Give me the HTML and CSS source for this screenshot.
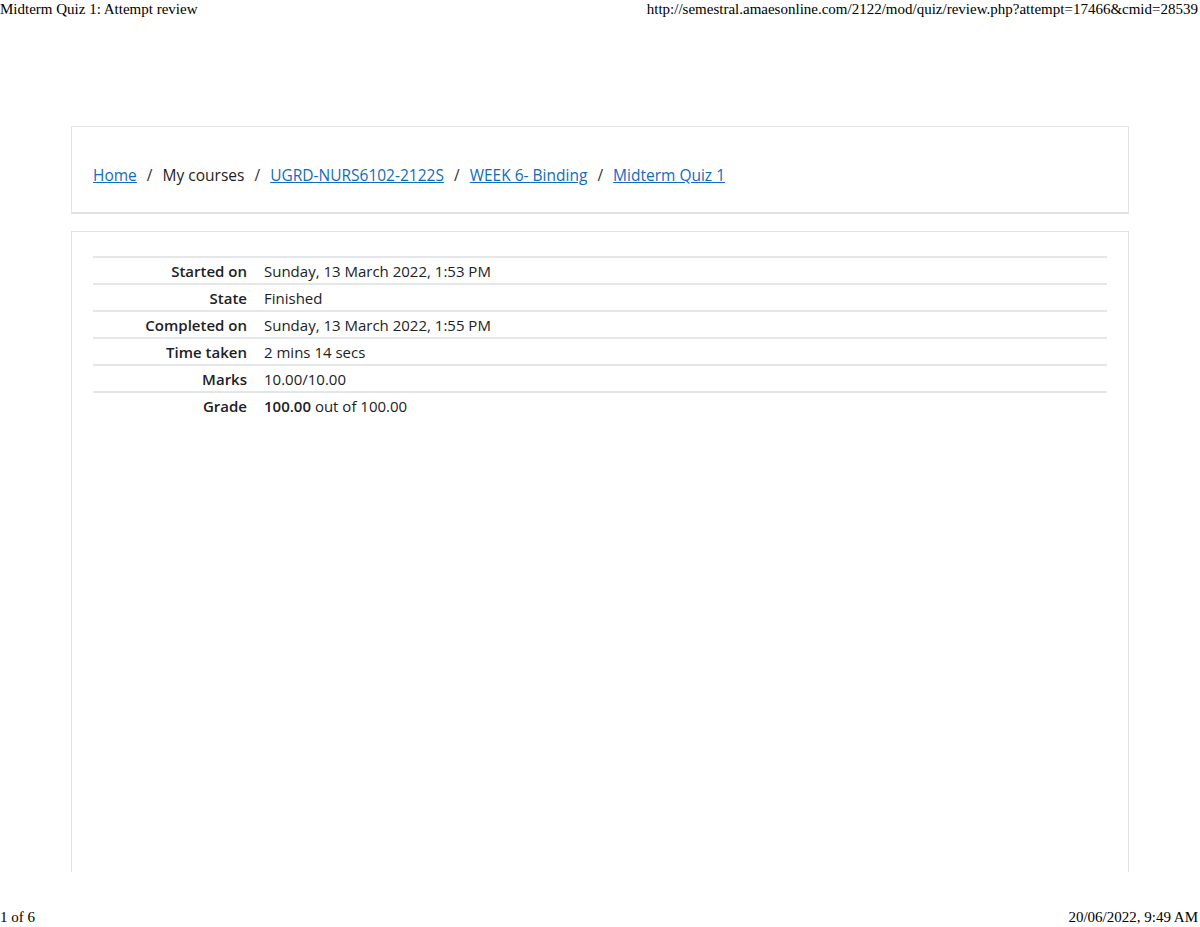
FILE: index.html
```html
<!DOCTYPE html>
<html lang="en">
<head>
  <meta charset="UTF-8">
  <meta name="viewport" content="width=device-width, initial-scale=1.0">
  <title>Midterm Quiz 1: Attempt review</title>
  <link rel="stylesheet" href="styles.css">
</head>
<body>

  <div class="print-header">
    <span>Midterm Quiz 1: Attempt review</span>
    <span>http://semestral.amaesonline.com/2122/mod/quiz/review.php?attempt=17466&amp;cmid=28539</span>
  </div>

  <div class="page">
    <div class="card nav-card">
      <nav class="breadcrumb">
        <a href="#">Home</a>
        <span class="sep">/</span>
        <span>My courses</span>
        <span class="sep">/</span>
        <a href="#">UGRD-NURS6102-2122S</a>
        <span class="sep">/</span>
        <a href="#">WEEK 6- Binding</a>
        <span class="sep">/</span>
        <a href="#">Midterm Quiz 1</a>
      </nav>
    </div>

    <div class="card main-card">
      <table class="summary">
        <tr><th>Started on</th><td>Sunday, 13 March 2022, 1:53 PM</td></tr>
        <tr><th>State</th><td>Finished</td></tr>
        <tr><th>Completed on</th><td>Sunday, 13 March 2022, 1:55 PM</td></tr>
        <tr><th>Time taken</th><td>2 mins 14 secs</td></tr>
        <tr><th>Marks</th><td>10.00/10.00</td></tr>
        <tr><th>Grade</th><td><b>100.00</b> out of 100.00</td></tr>
      </table>
    </div>
  </div>

  <div class="print-footer">
    <span>1 of 6</span>
    <span>20/06/2022, 9:49 AM</span>
  </div>

</body>
</html>
```

FILE: styles.css
```css
body {
  margin: 0;
  background: #fff;
  font-family: "Open Sans", "Noto Sans", sans-serif;
  color: #1d2125;
}
.print-header, .print-footer {
  display: flex;
  justify-content: space-between;
  font-family: "Liberation Serif", serif;
  font-size: 15px;
  line-height: 18px;
  color: #000;
  padding: 0 2px 0 0;
}
.page {
  padding: 108px 71px 0;
}
.card {
  border: 1px solid #e2e2e2;
  background: #fff;
}
.nav-card {
  height: 85px;
  border-bottom: 2px solid #e2e2e2;
  display: flex;
  align-items: center;
  padding: 0 21px;
}
.breadcrumb {
  font-size: 15.5px;
  padding-top: 11px;
}
.breadcrumb a {
  color: #0f6cbf;
  text-decoration: underline;
}
.breadcrumb .sep {
  color: #333;
  margin: 0 6px;
}
.main-card {
  margin-top: 17px;
  height: 616px;
  border-bottom: none;
  padding: 24px 21px 0;
}
.summary {
  width: 100%;
  border-collapse: collapse;
  font-size: 15px;
}
.summary th, .summary td {
  border-top: 2px solid #e4e7ea;
  height: 25px;
  padding: 0;
  vertical-align: middle;
}
.summary th {
  width: 154px;
  text-align: right;
  font-weight: 600;
}
.summary td {
  padding-left: 17px;
}
.summary b {
  font-weight: 600;
}
.print-footer {
  margin-top: 36px;
}
```
